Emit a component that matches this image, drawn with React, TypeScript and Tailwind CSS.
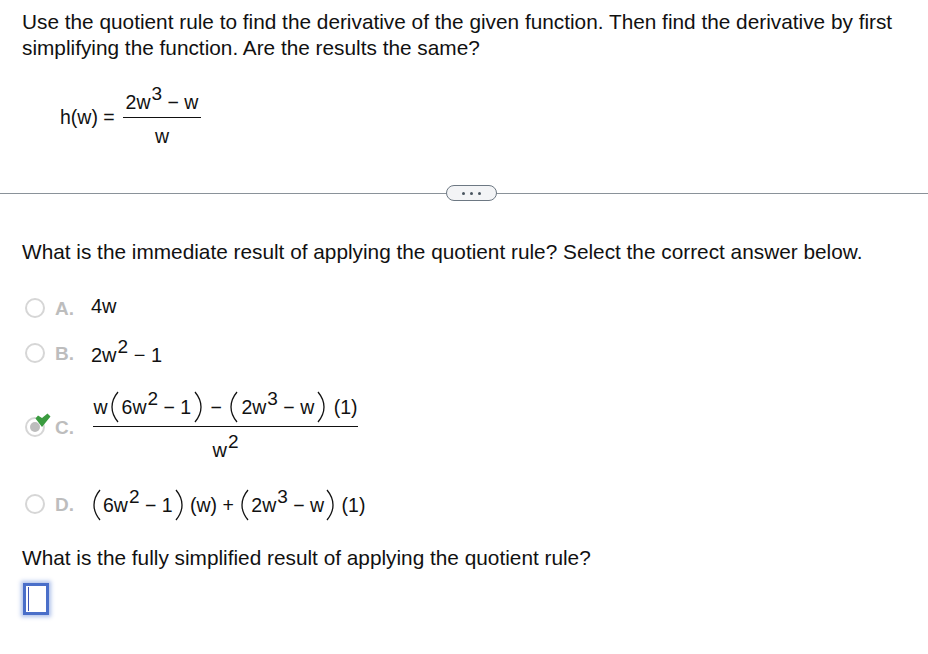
const font = { fontFamily: '"Liberation Sans", Arial, sans-serif' };

function Sup({ children }: { children: React.ReactNode }) {
  return <span className="text-[19px] leading-none align-[9px] ml-[1px]">{children}</span>;
}

function Paren({ side, wide }: { side: "l" | "r"; wide?: boolean }) {
  return (
    <svg width="10" height="34" viewBox="0 0 10 34" className={`inline-block align-[-10px] ${wide ? "mx-[2px]" : "mx-[1px]"}`} fill="none" stroke="#111" strokeWidth="1.3">
      <path d={side === "l" ? "M8 2 C3 8 2 13 2 17 C2 21 3 26 8 32" : "M2 2 C7 8 8 13 8 17 C8 21 7 26 2 32"} />
    </svg>
  );
}

function Radio() {
  return <span className="block w-[20px] h-[20px] shrink-0 rounded-full border-2 border-[#d6d6d6] bg-white" />;
}

function Letter({ children }: { children: React.ReactNode }) {
  return <span className="w-[46px] pl-[10px] shrink-0 text-[19px] leading-none font-bold text-[#bdbdbd]">{children}</span>;
}

export default function App() {
  return (
    <div style={font} className="w-[928px] h-[654px] bg-white text-[#111] text-[20.8px] leading-[26px] overflow-hidden pt-[9px]">
      <p className="pl-[22px] whitespace-nowrap">Use the quotient rule to find the derivative of the given function. Then find the derivative by first</p>
      <p className="pl-[22px] whitespace-nowrap">simplifying the function. Are the results the same?</p>

      <div className="flex items-center pl-[60px] mt-[14px] h-[78px] text-[19.5px]">
        <span className="w-[63px] whitespace-nowrap mt-[5px]">h(w) =</span>
        <div className="w-[78px] flex flex-col items-center">
          <div className="h-[39px] flex items-end justify-center w-full border-b border-[#111] leading-[24px] whitespace-nowrap pb-[3px]">
            <span>2w<Sup>3</Sup> <span>− w</span></span>
          </div>
          <div className="h-[32px] leading-[36px]">w</div>
        </div>
      </div>

      <div className="relative mt-[32px] h-[16px] flex items-center">
        <div className="w-full h-px bg-[#8a9299]" />
        <div className="absolute left-[446px] top-0 w-[51px] h-[16px] rounded-[8px] border border-[#6d7883] bg-[#f3f4f6] flex items-center justify-center gap-[5px]">
          <span className="w-[3px] h-[3px] rounded-full bg-[#4a5560]" />
          <span className="w-[3px] h-[3px] rounded-full bg-[#4a5560]" />
          <span className="w-[3px] h-[3px] rounded-full bg-[#4a5560]" />
        </div>
      </div>

      <p className="pl-[22px] mt-[38px] whitespace-nowrap">What is the immediate result of applying the quotient rule? Select the correct answer below.</p>

      <div className="mt-[29px] pl-[25px] text-[20px]">
        <div className="flex items-center h-[28px]">
          <Radio /><Letter>A.</Letter>
          <span className="-mt-[4px]">4w</span>
        </div>
        <div className="flex items-center h-[28px] mt-[17px]">
          <Radio /><Letter>B.</Letter>
          <span className="-mt-[2px] whitespace-nowrap">2w<Sup>2</Sup> <span>− 1</span></span>
        </div>
        <div className="flex items-center mt-[22px] h-[76px]">
          <div className="relative w-[20px] h-[20px] shrink-0">
            <span className="absolute inset-0 rounded-full border-2 border-[#d6d6d6]" />
            <span className="absolute left-[5px] top-[5px] w-[10px] h-[10px] rounded-full bg-[#bdbdbd]" />
            <svg className="absolute left-[10px] -top-[4px]" width="16" height="15" viewBox="0 0 16 15">
              <path d="M0.5 5.5 L3 2.5 L7 5 L12.5 0.5 L15.5 3.5 L7 14 Z" fill="#3a9b3f" />
            </svg>
          </div>
          <Letter>C.</Letter>
          <div className="flex flex-col items-center w-[265px] ml-[2px]">
            <div className="h-[38px] w-full border-b border-[#111] whitespace-nowrap text-center leading-[36px] text-[19.5px]">
              w<Paren side="l" wide />6w<Sup>2</Sup> − 1<Paren side="r" wide /> − <Paren side="l" wide />2w<Sup>3</Sup> − w<Paren side="r" wide /> (1)
            </div>
            <div className="h-[38px] leading-[46px]">w<Sup>2</Sup></div>
          </div>
        </div>
        <div className="flex items-center h-[36px] mt-[21px]">
          <Radio /><Letter>D.</Letter>
          <span className="whitespace-nowrap text-[19.5px]">
            <Paren side="l" />6w<Sup>2</Sup> − 1<Paren side="r" /> (w) + <Paren side="l" />2w<Sup>3</Sup> − w<Paren side="r" /> (1)
          </span>
        </div>
      </div>

      <p className="pl-[22px] mt-[23px] whitespace-nowrap">What is the fully simplified result of applying the quotient rule?</p>

      <div className="ml-[23px] mt-[12px] w-[26px] h-[32px] border-[3px] border-[#4a6fc9] shadow-[0_0_4px_2px_rgba(80,120,210,0.45)] bg-white flex items-center pl-[2px]">
        <span className="block w-px h-[24px] bg-[#3f56b5]" />
      </div>
    </div>
  );
}
